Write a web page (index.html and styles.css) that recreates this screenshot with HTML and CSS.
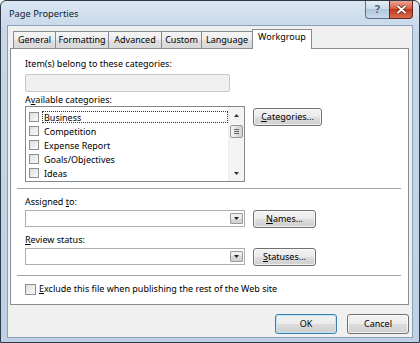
FILE: index.html
```html
<!DOCTYPE html>
<html>
<head>
<meta charset="utf-8">
<link rel="stylesheet" href="styles.css">
</head>
<body>
<div class="window">
  <div class="titlebar">
    <span class="title">Page Properties</span>
    <div class="caption-btns">
      <div class="cap help">?</div>
      <div class="cap close">
        <svg width="11" height="9" viewBox="0 0 11 9"><path d="M1.5 1 L9.5 8 M9.5 1 L1.5 8" stroke="#5a1a10" stroke-width="3.4" fill="none"/><path d="M1.5 1 L9.5 8 M9.5 1 L1.5 8" stroke="#fff" stroke-width="2" fill="none"/></svg>
      </div>
    </div>
  </div>
  <div class="client">
    <div class="tabs">
      <div class="tab t1">General</div>
      <div class="tab t2">Formatting</div>
      <div class="tab t3">Advanced</div>
      <div class="tab t4">Custom</div>
      <div class="tab t5">Language</div>
      <div class="tab active">Workgroup</div>
    </div>
    <div class="panel">
      <div class="label lbl-items">Item(s) belong to these categories:</div>
      <div class="textbox disabled"></div>
      <div class="label lbl-avail">A<u>v</u>ailable categories:</div>
      <div class="row">
        <div class="listbox">
          <div class="items">
            <div class="item"><span class="cb"></span><span class="itxt focus">Business</span></div>
            <div class="item"><span class="cb"></span><span class="itxt">Competition</span></div>
            <div class="item"><span class="cb"></span><span class="itxt">Expense Report</span></div>
            <div class="item"><span class="cb"></span><span class="itxt">Goals/Objectives</span></div>
            <div class="item"><span class="cb"></span><span class="itxt">Ideas</span></div>
          </div>
          <div class="vscroll">
            <div class="sarrow"><svg width="5" height="3" viewBox="0 0 5 3"><path d="M0 3 L2.5 0 L5 3 Z" fill="#333"/></svg></div>
            <div class="strack">
              <div class="thumb"><span></span><span></span><span></span></div>
            </div>
            <div class="sarrow"><svg width="5" height="3" viewBox="0 0 5 3"><path d="M0 0 L2.5 3 L5 0 Z" fill="#333"/></svg></div>
          </div>
        </div>
        <div class="btn btn-cat"><u>C</u>ategories...</div>
      </div>
      <div class="sep sep1"></div>
      <div class="label lbl-assign">Assigned <u>t</u>o:</div>
      <div class="row">
        <div class="combo"><div class="dd"><svg width="5" height="3" viewBox="0 0 5 3"><path d="M0 0 L2.5 3 L5 0 Z" fill="#222"/></svg></div></div>
        <div class="btn btn-side"><u>N</u>ames...</div>
      </div>
      <div class="label lbl-review"><u>R</u>eview status:</div>
      <div class="row">
        <div class="combo"><div class="dd"><svg width="5" height="3" viewBox="0 0 5 3"><path d="M0 0 L2.5 3 L5 0 Z" fill="#222"/></svg></div></div>
        <div class="btn btn-side"><u>S</u>tatuses...</div>
      </div>
      <div class="sep sep2"></div>
      <div class="exclude"><span class="cb big"></span><span><u>E</u>xclude this file when publishing the rest of the Web site</span></div>
    </div>
    <div class="footer">
      <div class="btn btn-foot default">OK</div>
      <div class="btn btn-foot">Cancel</div>
    </div>
  </div>
</div>
</body>
</html>
```
FILE: styles.css
```css
* { box-sizing: border-box; }
html, body { margin: 0; padding: 0; }
body {
  width: 420px;
  height: 343px;
  overflow: hidden;
  font-family: "Noto Sans", "Open Sans", sans-serif;
  font-size: 9px;
  color: #000;
  background: #fff;
}
u { text-underline-offset: 1px; }
.window {
  width: 420px;
  height: 343px;
  border: 1px solid #2f3a46;
  border-radius: 6px 6px 0 0;
  background: linear-gradient(#dbe7f3, #c6d7ea 30px, #bdd0e5);
  padding: 0 6px 4px 6px;
  display: flex;
  flex-direction: column;
}
.titlebar {
  height: 24px;
  display: flex;
  align-items: flex-start;
  justify-content: space-between;
  padding-left: 2px;
}
.title {
  margin-top: 6px;
  font-size: 9.3px;
  line-height: 13px;
  color: #0c1a2b;
}
.caption-btns {
  display: flex;
  margin-top: 0;
}
.cap {
  height: 18px;
  border: 1px solid #5d6f86;
  border-top: none;
  display: flex;
  align-items: center;
  justify-content: center;
}
.help {
  width: 24px;
  border-radius: 0 0 0 4px;
  border-right: none;
  background: linear-gradient(#e6eef7, #c9d9ea 50%, #b2c7dd 50%, #c7daee);
  color: #55687f;
  font-size: 11px;
  font-weight: bold;
  font-family: "DejaVu Sans", sans-serif;
  text-shadow: 0 0 1px #fff;
}
.close {
  width: 24px;
  border-radius: 0 0 4px 0;
  border-color: #6e2218;
  background: linear-gradient(#eaa595, #d5573d 50%, #c2361d 50%, #d67050);
}
.client {
  flex: 1;
  background: #f0f0f0;
  border: 1px solid #8ba0b8;
  padding: 2px 3px 0 2px;
  display: flex;
  flex-direction: column;
}
.tabs {
  display: flex;
  align-items: flex-end;
  padding-left: 3px;
  height: 20px;
  position: relative;
  z-index: 1;
}
.tab {
  height: 17px;
  border: 1px solid #898c95;
  border-bottom: none;
  border-right: none;
  background: linear-gradient(#f5f5f5, #ececec 50%, #e0e0e0 50%, #d8d8d8);
  line-height: 15px;
  text-align: center;
  color: #000;
}
.t1 { width: 42px; }
.t2 { width: 53px; }
.t3 { width: 53px; }
.t4 { width: 40px; }
.t5 { width: 51px; }
.tab.active {
  width: 60px;
  height: 20px;
  margin-bottom: -1px;
  background: #fff;
  border-right: 1px solid #898c95;
  line-height: 14px;
}
.panel {
  height: 257px;
  background: #fff;
  border: 1px solid #898c95;
  padding: 0 6px 0 14px;
  display: flex;
  flex-direction: column;
  align-items: flex-start;
}
.label {
  line-height: 12px;
  height: 12px;
}
.lbl-items { margin-top: 9px; }
.textbox {
  width: 205px;
  height: 18px;
  margin-top: 4px;
  border: 1px solid #abadb3;
  border-radius: 2px;
}
.textbox.disabled {
  background: #f0f0f0;
  border-color: #c8c8c8;
}
.lbl-avail { margin-top: 2px; }
.row {
  display: flex;
  align-items: flex-start;
}
.listbox {
  width: 220px;
  height: 76px;
  border: 1px solid #828790;
  display: flex;
  background: #fff;
}
.items {
  flex: 1;
  padding: 3px 0 0 3px;
}
.item {
  height: 14px;
  display: flex;
  align-items: center;
}
.cb {
  width: 10px;
  height: 10px;
  border: 1px solid #8e8f8f;
  background: linear-gradient(135deg, #dedede, #fbfbfb);
  margin-right: 3px;
  flex: none;
}
.itxt {
  flex: 1;
  padding-left: 1px;
  line-height: 11px;
  height: 12px;
  border: 1px dotted transparent;
}
.itxt.focus { border: 1px dotted #333; }
.vscroll {
  width: 16px;
  display: flex;
  flex-direction: column;
  background: #f4f4f4;
  border-left: 1px solid #ececec;
}
.sarrow {
  height: 16px;
  display: flex;
  align-items: center;
  justify-content: center;
}
.strack { flex: 1; padding: 2px 1px 0 1px; }
.thumb {
  height: 13px;
  border: 1px solid #979797;
  border-radius: 2px;
  background: linear-gradient(90deg, #f3f3f3, #e6e6e6 50%, #d9d9d9 50%, #d4d4d4);
  display: flex;
  flex-direction: column;
  align-items: center;
  justify-content: center;
  gap: 1px;
}
.thumb span { width: 5px; height: 1px; background: #666; }
.btn {
  border: 1px solid #707070;
  border-radius: 3px;
  background: linear-gradient(#f2f2f2, #ebebeb 50%, #dddddd 50%, #cfcfcf);
  display: flex;
  align-items: center;
  justify-content: center;
  line-height: 12px;
  box-shadow: inset 0 0 0 1px rgba(255,255,255,0.7);
}
.btn-cat {
  width: 69px;
  height: 18px;
  margin-left: 8px;
  margin-top: 2px;
}
.sep {
  width: 384px;
  height: 2px;
  margin-left: -8px;
  border-top: 1px solid #a0a0a0;
  border-bottom: 1px solid #fff;
}
.sep1 { margin-top: 6px; }
.lbl-assign { margin-top: 6px; }
.combo {
  width: 220px;
  height: 17px;
  margin-top: 2px;
  border: 1px solid #abadb3;
  background: #fff;
  display: flex;
  justify-content: flex-end;
  align-items: center;
  padding-right: 1px;
}
.dd {
  width: 13px;
  height: 11px;
  border: 1px solid #9a9a9a;
  border-radius: 1px;
  background: linear-gradient(#f3f3f3, #e8e8e8 50%, #dadada 50%, #d0d0d0);
  display: flex;
  align-items: center;
  justify-content: center;
}
.btn-side {
  width: 63px;
  height: 18px;
  margin-left: 8px;
  margin-top: 2px;
}
.lbl-review { margin-top: 6px; }
.sep2 { margin-top: 9px; }
.exclude {
  display: flex;
  align-items: center;
  margin-top: 6px;
  line-height: 12px;
}
.cb.big {
  width: 11px;
  height: 11px;
  margin-right: 3px;
}
.footer {
  display: flex;
  justify-content: flex-end;
  gap: 10px;
  padding-top: 9px;
  padding-right: 0;
}
.btn-foot {
  width: 62px;
  height: 20px;
}
.btn.default {
  border-color: #3c7fb1;
  box-shadow: inset 0 0 0 1px #bfe6f7;
}
```
